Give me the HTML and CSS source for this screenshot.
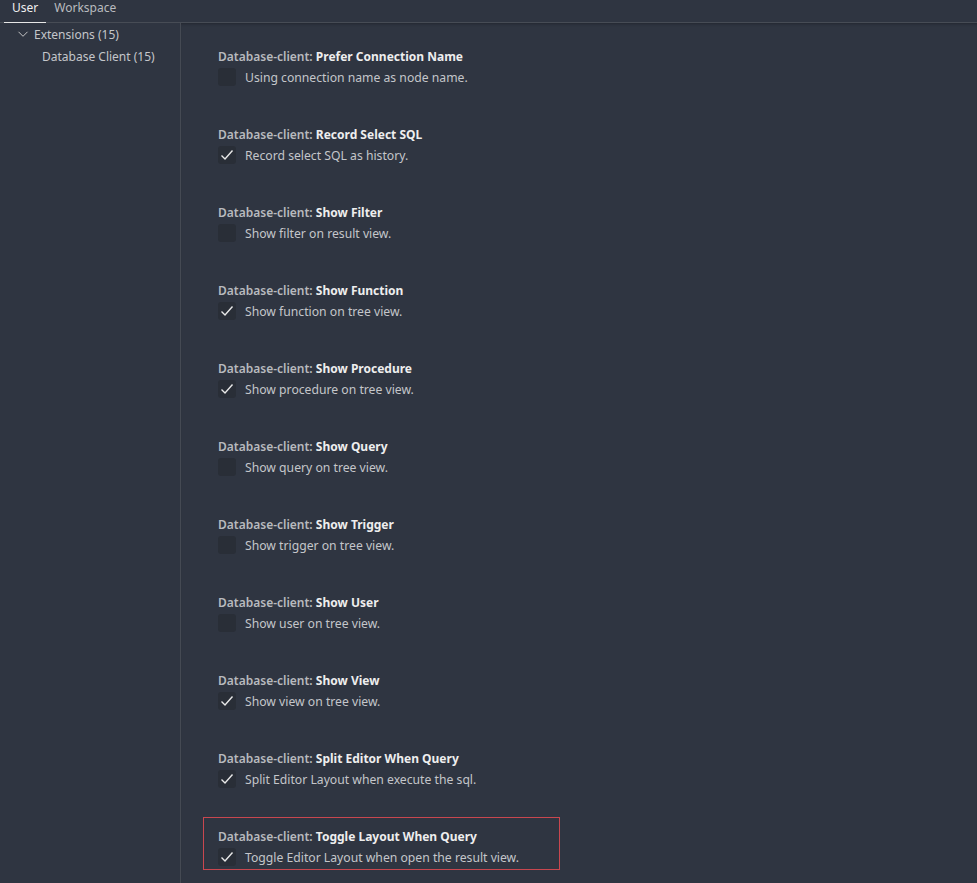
FILE: index.html
```html
<!DOCTYPE html>
<html>
<head>
<meta charset="utf-8">
<link rel="stylesheet" href="styles.css">
</head>
<body>
<div class="app">
  <div class="tabs">
    <div class="tab active">User</div>
    <div class="tab">Workspace</div>
  </div>
  <div class="body">
    <div class="toc">
      <div class="toc-row group">
        <svg class="chev" width="12" height="12" viewBox="0 0 12 12"><path d="M1.5 3.8 L6 8.3 L10.5 3.8" fill="none" stroke="#c5c5c5" stroke-width="1"/></svg>
        <span>Extensions (15)</span>
      </div>
      <div class="toc-row child">Database Client (15)</div>
    </div>
    <div class="list">
      <div class="item">
        <div class="title"><span class="cat">Database-client: </span><span class="name">Prefer Connection Name</span></div>
        <div class="desc"><span class="cb"></span><span>Using connection name as node name.</span></div>
      </div>
      <div class="item">
        <div class="title"><span class="cat">Database-client: </span><span class="name">Record Select SQL</span></div>
        <div class="desc"><span class="cb on"><svg viewBox="0 0 18 18" width="18" height="18"><path d="M3.5 9.5 L7 13 L14.5 4.5" fill="none" stroke="#e8e8e8" stroke-width="1.4"/></svg></span><span>Record select SQL as history.</span></div>
      </div>
      <div class="item">
        <div class="title"><span class="cat">Database-client: </span><span class="name">Show Filter</span></div>
        <div class="desc"><span class="cb"></span><span>Show filter on result view.</span></div>
      </div>
      <div class="item">
        <div class="title"><span class="cat">Database-client: </span><span class="name">Show Function</span></div>
        <div class="desc"><span class="cb on"><svg viewBox="0 0 18 18" width="18" height="18"><path d="M3.5 9.5 L7 13 L14.5 4.5" fill="none" stroke="#e8e8e8" stroke-width="1.4"/></svg></span><span>Show function on tree view.</span></div>
      </div>
      <div class="item">
        <div class="title"><span class="cat">Database-client: </span><span class="name">Show Procedure</span></div>
        <div class="desc"><span class="cb on"><svg viewBox="0 0 18 18" width="18" height="18"><path d="M3.5 9.5 L7 13 L14.5 4.5" fill="none" stroke="#e8e8e8" stroke-width="1.4"/></svg></span><span>Show procedure on tree view.</span></div>
      </div>
      <div class="item">
        <div class="title"><span class="cat">Database-client: </span><span class="name">Show Query</span></div>
        <div class="desc"><span class="cb"></span><span>Show query on tree view.</span></div>
      </div>
      <div class="item">
        <div class="title"><span class="cat">Database-client: </span><span class="name">Show Trigger</span></div>
        <div class="desc"><span class="cb"></span><span>Show trigger on tree view.</span></div>
      </div>
      <div class="item">
        <div class="title"><span class="cat">Database-client: </span><span class="name">Show User</span></div>
        <div class="desc"><span class="cb"></span><span>Show user on tree view.</span></div>
      </div>
      <div class="item">
        <div class="title"><span class="cat">Database-client: </span><span class="name">Show View</span></div>
        <div class="desc"><span class="cb on"><svg viewBox="0 0 18 18" width="18" height="18"><path d="M3.5 9.5 L7 13 L14.5 4.5" fill="none" stroke="#e8e8e8" stroke-width="1.4"/></svg></span><span>Show view on tree view.</span></div>
      </div>
      <div class="item">
        <div class="title"><span class="cat">Database-client: </span><span class="name">Split Editor When Query</span></div>
        <div class="desc"><span class="cb on"><svg viewBox="0 0 18 18" width="18" height="18"><path d="M3.5 9.5 L7 13 L14.5 4.5" fill="none" stroke="#e8e8e8" stroke-width="1.4"/></svg></span><span>Split Editor Layout when execute the sql.</span></div>
      </div>
      <div class="item focused">
        <div class="title"><span class="cat">Database-client: </span><span class="name">Toggle Layout When Query</span></div>
        <div class="desc"><span class="cb on"><svg viewBox="0 0 18 18" width="18" height="18"><path d="M3.5 9.5 L7 13 L14.5 4.5" fill="none" stroke="#e8e8e8" stroke-width="1.4"/></svg></span><span>Toggle Editor Layout when open the result view.</span></div>
      </div>
    </div>
  </div>
</div>
</body>
</html>
```
FILE: styles.css
```css
html, body {
  margin: 0;
  padding: 0;
  background: #2f3541;
  height: 100%;
  overflow: hidden;
}
body {
  font-family: "Noto Sans", "Open Sans", sans-serif;
  font-size: 12px;
  color: #c4c6ca;
}
.app {
  display: flex;
  flex-direction: column;
  height: 883px;
}
.tabs {
  display: flex;
  height: 22px;
  border-bottom: 1px solid #474c55;
  padding-left: 4px;
  box-sizing: content-box;
}
.tab {
  padding: 0 8px;
  line-height: 15px;
  height: 22px;
  box-sizing: border-box;
  font-size: 12px;
  color: #b9bbbf;
}
.tab.active {
  color: #f0f0f0;
  border-bottom: 1px solid #e6e6e6;
  height: 23px;
  margin-bottom: -1px;
}
.body {
  flex: 1;
  display: flex;
  min-height: 0;
}
.toc {
  width: 180px;
  border-right: 1px solid #454a53;
  flex: none;
}
.toc-row {
  height: 22px;
  display: flex;
  align-items: center;
  color: #c4c6ca;
}
.toc-row.group {
  padding-left: 17px;
  gap: 5px;
}
.toc-row.child {
  padding-left: 42px;
}
.chev {
  flex: none;
}
.list {
  flex: 1;
  padding: 14px 0 0 22px;
  display: flex;
  flex-direction: column;
  gap: 25px;
  box-shadow: inset 0 3px 3px -2px #23272f;
}
.item {
  width: 357px;
  box-sizing: border-box;
  border: 1px solid transparent;
  padding: 10px 0 3px 14px;
}
.item.focused {
  border-color: #c9474f;
}
.title {
  line-height: 18px;
  height: 18px;
  white-space: nowrap;
}
.cat {
  color: #b8babe;
  font-weight: 600;
}
.name {
  color: #eeeeee;
  font-weight: 700;
}
.desc {
  margin-top: 2px;
  display: flex;
  align-items: center;
  gap: 9px;
  height: 18px;
  font-size: 12.2px;
  color: #c4c6ca;
  white-space: nowrap;
}
.cb {
  width: 18px;
  height: 18px;
  border-radius: 3px;
  background: #292e37;
  flex: none;
  display: block;
}
.cb svg {
  display: block;
}
```
